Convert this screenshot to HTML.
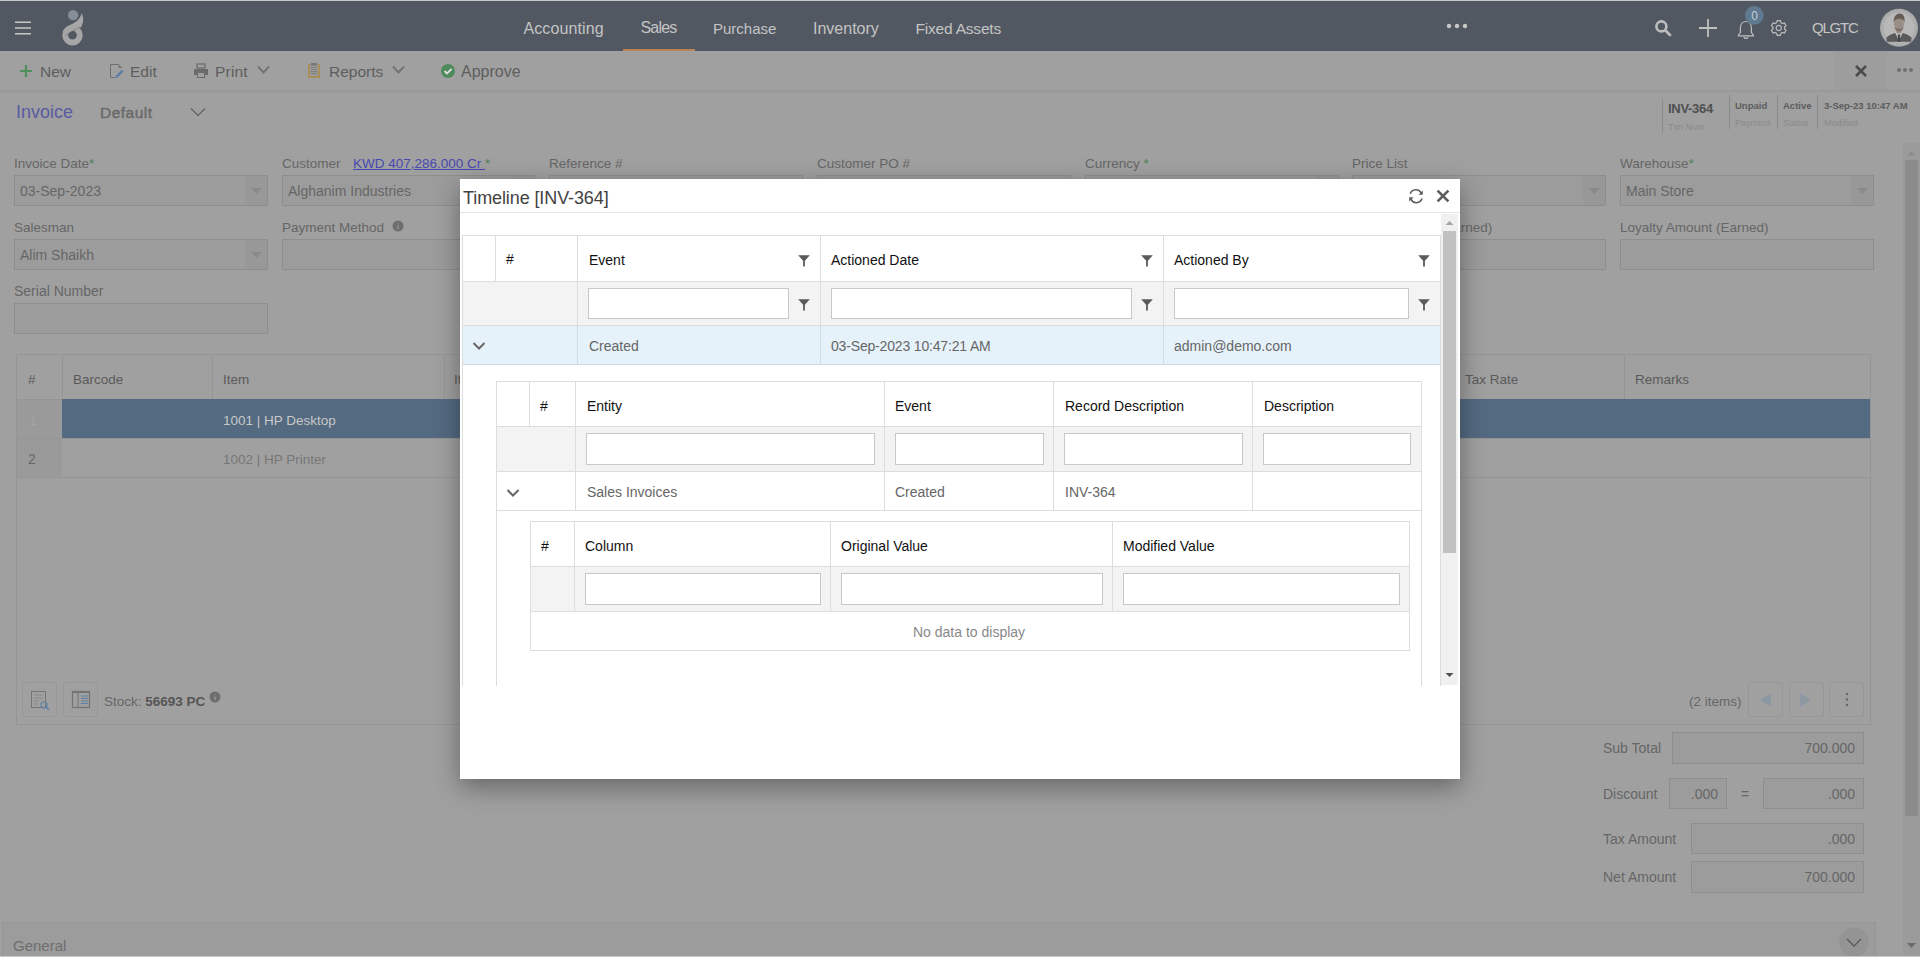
<!DOCTYPE html>
<html><head><meta charset="utf-8"><title>Invoice</title>
<style>
html,body{margin:0;padding:0}
body{width:1920px;height:957px;overflow:hidden;position:relative;background:#a0a0a0;font-family:"Liberation Sans",sans-serif}
.t{position:absolute;line-height:1;white-space:nowrap}
.r{position:absolute}
svg.r{overflow:visible}
</style></head><body>
<div class="r" style="left:0px;top:90px;width:1920px;height:1px;background:#969696"></div>
<div class="r" style="left:0px;top:91px;width:1920px;height:2px;background:#9c9c9c"></div>
<div class="r" style="left:1835px;top:51px;width:52px;height:39px;background:#9d9d9d"></div>
<svg class="r" style="left:0;top:51px" width="1920" height="40" viewBox="0 51 1920 40"><path d="M26 65v12M20 71h12" stroke="#4f8f5c" stroke-width="2.2"/><path d="M110.5 64.5h8l3.5 3.5M110.5 64.5v13h5" fill="none" stroke="#6e6e6e" stroke-width="1"/><path d="M118.5 64.5l3.5 3.5h-3.5z" fill="#777"/><path d="M115.5 78.2L116.3 75.3L121.8 69.8L123.6 71.6L118.1 77.1Z" fill="#5d7fa6"/><rect x="197" y="64" width="8" height="4" fill="none" stroke="#6a6a6a" stroke-width="1.2"/><path d="M194 69h14v6h-3v3h-8v-3h-3z" fill="#6a6a6a"/><rect x="198" y="73" width="6" height="4" fill="#a0a0a0"/><path d="M258 66.5l5.5 6 5.5-6" fill="none" stroke="#737373" stroke-width="1.9"/><rect x="308" y="64" width="12" height="14" fill="#a88f5a"/><rect x="310" y="65" width="8" height="11" fill="#9a9a9a"/><rect x="311" y="63" width="6" height="2.5" fill="#777"/><path d="M311 67.5h6M311 69.5h6M311 71.5h6M311 73.5h6" stroke="#7a7a7a" stroke-width="0.8"/><path d="M393 66.5l5.5 6 5.5-6" fill="none" stroke="#737373" stroke-width="1.9"/><circle cx="448" cy="71" r="7" fill="#4e8a5c"/><path d="M444.5 71l2.5 2.5 4.5-4.5" fill="none" stroke="#ddd" stroke-width="1.8"/><path d="M1856 66l10 10M1866 66l-10 10" stroke="#4a4a4a" stroke-width="2.5"/><circle cx="1899" cy="70" r="2" fill="#707070"/><circle cx="1905" cy="70" r="2" fill="#707070"/><circle cx="1911" cy="70" r="2" fill="#707070"/></svg>
<div class="t" style="left:40px;top:64px;font-size:15.5px;color:#5e5e5e;">New</div>
<div class="t" style="left:130px;top:64px;font-size:15.5px;color:#5e5e5e;">Edit</div>
<div class="t" style="left:215px;top:64px;font-size:15.5px;color:#5e5e5e;letter-spacing:0.2px;">Print</div>
<div class="t" style="left:329px;top:64px;font-size:15.5px;color:#5e5e5e;">Reports</div>
<div class="t" style="left:461px;top:64px;font-size:16px;color:#5e5e5e;">Approve</div>
<div class="t" style="left:16px;top:103px;font-size:18px;color:#5a5aa2;">Invoice</div>
<div class="t" style="left:100px;top:105px;font-size:15.5px;color:#6a6a6a;letter-spacing:0.5px;-webkit-text-stroke:0.45px #6a6a6a;">Default</div>
<svg class="r" style="left:188px;top:104px" width="20" height="16"><path d="M3 4.5l7 7 7-7" fill="none" stroke="#666" stroke-width="1.4"/></svg>
<div class="r" style="left:1662px;top:99px;width:1px;height:34px;background:#8a8a8a"></div>
<div class="t" style="left:1668px;top:102px;font-size:13px;color:#505050;font-weight:700;letter-spacing:-0.3px;">INV-364</div>
<div class="t" style="left:1668px;top:122.5px;font-size:9px;color:#8a8a8a;">Txn Num</div>
<div class="r" style="left:1729px;top:95px;width:1px;height:34px;background:#8a8a8a"></div>
<div class="t" style="left:1735px;top:101px;font-size:9.5px;color:#5c5c5c;font-weight:700;">Unpaid</div>
<div class="t" style="left:1735px;top:118.5px;font-size:9px;color:#8a8a8a;">Payment</div>
<div class="r" style="left:1777px;top:95px;width:1px;height:34px;background:#8a8a8a"></div>
<div class="t" style="left:1783px;top:101px;font-size:9.5px;color:#5c5c5c;font-weight:700;">Active</div>
<div class="t" style="left:1783px;top:118.5px;font-size:9px;color:#8a8a8a;">Status</div>
<div class="r" style="left:1817px;top:95px;width:1px;height:34px;background:#8a8a8a"></div>
<div class="t" style="left:1824px;top:101px;font-size:9.5px;color:#5c5c5c;font-weight:700;">3-Sep-23 10:47 AM</div>
<div class="t" style="left:1824px;top:118.5px;font-size:9px;color:#8a8a8a;">Modified</div>
<div class="t" style="left:14px;top:157px;font-size:13.5px;color:#666666;">Invoice Date<span style="color:#4d7d58">*</span></div>
<div class="t" style="left:282px;top:157px;font-size:13.5px;color:#666666;">Customer</div>
<div class="t" style="left:549px;top:157px;font-size:13.5px;color:#666666;">Reference #</div>
<div class="t" style="left:817px;top:157px;font-size:13.5px;color:#666666;">Customer PO #</div>
<div class="t" style="left:1085px;top:157px;font-size:13.5px;color:#666666;">Currency <span style="color:#4d7d58">*</span></div>
<div class="t" style="left:1352px;top:157px;font-size:13.5px;color:#666666;">Price List</div>
<div class="t" style="left:1620px;top:157px;font-size:13.5px;color:#666666;">Warehouse<span style="color:#4d7d58">*</span></div>
<div class="t" style="left:353px;top:157px;font-size:13.5px;color:#4848b0;"><span style="text-decoration:underline">KWD 407,286.000 Cr </span><span style="color:#4d7d58">*</span></div>
<div class="r" style="left:14px;top:175px;width:254px;height:31px;background:#9c9c9c;border:1px solid #8e8e8e;box-sizing:border-box"></div>
<div class="r" style="left:245px;top:176px;width:22px;height:29px;background:#989898"></div>
<svg class="r" style="left:251px;top:188px" width="11" height="6"><path d="M0 0h11l-5.5 6z" fill="#8a8a8a"/></svg>
<div class="t" style="left:20px;top:184px;font-size:14px;color:#666;">03-Sep-2023</div>
<div class="r" style="left:282px;top:175px;width:253px;height:31px;background:#9c9c9c;border:1px solid #8e8e8e;box-sizing:border-box"></div>
<div class="r" style="left:512px;top:176px;width:22px;height:29px;background:#989898"></div>
<svg class="r" style="left:518px;top:188px" width="11" height="6"><path d="M0 0h11l-5.5 6z" fill="#8a8a8a"/></svg>
<div class="t" style="left:288px;top:184px;font-size:14px;color:#666;">Alghanim Industries</div>
<div class="r" style="left:549px;top:175px;width:254px;height:31px;background:#9c9c9c;border:1px solid #8e8e8e;box-sizing:border-box"></div>
<div class="r" style="left:817px;top:175px;width:254px;height:31px;background:#9c9c9c;border:1px solid #8e8e8e;box-sizing:border-box"></div>
<div class="r" style="left:1085px;top:175px;width:254px;height:31px;background:#9c9c9c;border:1px solid #8e8e8e;box-sizing:border-box"></div>
<div class="r" style="left:1316px;top:176px;width:22px;height:29px;background:#989898"></div>
<svg class="r" style="left:1322px;top:188px" width="11" height="6"><path d="M0 0h11l-5.5 6z" fill="#8a8a8a"/></svg>
<div class="r" style="left:1352px;top:175px;width:254px;height:31px;background:#9c9c9c;border:1px solid #8e8e8e;box-sizing:border-box"></div>
<div class="r" style="left:1583px;top:176px;width:22px;height:29px;background:#989898"></div>
<svg class="r" style="left:1589px;top:188px" width="11" height="6"><path d="M0 0h11l-5.5 6z" fill="#8a8a8a"/></svg>
<div class="r" style="left:1620px;top:175px;width:254px;height:31px;background:#9c9c9c;border:1px solid #8e8e8e;box-sizing:border-box"></div>
<div class="r" style="left:1851px;top:176px;width:22px;height:29px;background:#989898"></div>
<svg class="r" style="left:1857px;top:188px" width="11" height="6"><path d="M0 0h11l-5.5 6z" fill="#8a8a8a"/></svg>
<div class="t" style="left:1626px;top:184px;font-size:14px;color:#666;">Main Store</div>
<div class="t" style="left:14px;top:221px;font-size:13.5px;color:#666666;">Salesman</div>
<div class="t" style="left:282px;top:221px;font-size:13.5px;color:#666666;">Payment Method</div>
<div class="t" style="left:1352px;top:221px;font-size:13.5px;color:#666666;">Loyalty Points (Earned)</div>
<div class="t" style="left:1620px;top:221px;font-size:13.5px;color:#666666;">Loyalty Amount (Earned)</div>
<svg class="r" style="left:392px;top:220px" width="12" height="12"><circle cx="6" cy="6" r="5.5" fill="#6e6e6e"/><path d="M6 3.5v.8M6 5.5v3.5" stroke="#9a9a9a" stroke-width="1.3"/></svg>
<div class="r" style="left:14px;top:239px;width:254px;height:31px;background:#9c9c9c;border:1px solid #8e8e8e;box-sizing:border-box"></div>
<div class="r" style="left:245px;top:240px;width:22px;height:29px;background:#989898"></div>
<svg class="r" style="left:251px;top:252px" width="11" height="6"><path d="M0 0h11l-5.5 6z" fill="#8a8a8a"/></svg>
<div class="t" style="left:20px;top:248px;font-size:14px;color:#666;">Alim Shaikh</div>
<div class="r" style="left:282px;top:239px;width:253px;height:31px;background:#9c9c9c;border:1px solid #8e8e8e;box-sizing:border-box"></div>
<div class="r" style="left:549px;top:239px;width:254px;height:31px;background:#9c9c9c;border:1px solid #8e8e8e;box-sizing:border-box"></div>
<div class="r" style="left:817px;top:239px;width:254px;height:31px;background:#9c9c9c;border:1px solid #8e8e8e;box-sizing:border-box"></div>
<div class="r" style="left:1085px;top:239px;width:254px;height:31px;background:#9c9c9c;border:1px solid #8e8e8e;box-sizing:border-box"></div>
<div class="r" style="left:1352px;top:239px;width:254px;height:31px;background:#9c9c9c;border:1px solid #8e8e8e;box-sizing:border-box"></div>
<div class="r" style="left:1620px;top:239px;width:254px;height:31px;background:#9c9c9c;border:1px solid #8e8e8e;box-sizing:border-box"></div>
<div class="t" style="left:14px;top:284px;font-size:14px;color:#666666;">Serial Number</div>
<div class="r" style="left:14px;top:303px;width:254px;height:31px;background:#9c9c9c;border:1px solid #8e8e8e;box-sizing:border-box"></div>
<div class="r" style="left:16px;top:354px;width:1855px;height:371px;border:1px solid #959595;box-sizing:border-box"></div>
<div class="r" style="left:17px;top:399px;width:1853px;height:1px;background:#959595"></div>
<div class="r" style="left:17px;top:477px;width:1853px;height:1px;background:#959595"></div>
<div class="r" style="left:62px;top:355px;width:1px;height:44px;background:#959595"></div>
<div class="r" style="left:212px;top:355px;width:1px;height:44px;background:#959595"></div>
<div class="r" style="left:444px;top:355px;width:1px;height:44px;background:#959595"></div>
<div class="r" style="left:1624px;top:355px;width:1px;height:44px;background:#959595"></div>
<div class="r" style="left:17px;top:400px;width:45px;height:77px;background:#9a9a9a"></div>
<div class="r" style="left:62px;top:399px;width:1808px;height:40px;background:#546a81"></div>
<div class="r" style="left:17px;top:438px;width:1853px;height:1px;background:#959595"></div>
<div class="t" style="left:28px;top:373px;font-size:13.5px;color:#5a5a5a;">#</div>
<div class="t" style="left:73px;top:373px;font-size:13.5px;color:#5a5a5a;">Barcode</div>
<div class="t" style="left:223px;top:373px;font-size:13.5px;color:#5a5a5a;">Item</div>
<div class="t" style="left:454px;top:373px;font-size:13.5px;color:#5a5a5a;">It</div>
<div class="t" style="left:1465px;top:373px;font-size:13.5px;color:#5a5a5a;">Tax Rate</div>
<div class="t" style="left:1635px;top:373px;font-size:13.5px;color:#5a5a5a;">Remarks</div>
<div class="t" style="left:29px;top:413px;font-size:14px;color:#a4a4a4;">1</div>
<div class="t" style="left:223px;top:414px;font-size:13.5px;color:#c8c8c8;">1001 | HP Desktop</div>
<div class="t" style="left:28px;top:452px;font-size:14px;color:#666;">2</div>
<div class="t" style="left:223px;top:453px;font-size:13.5px;color:#777;">1002 | HP Printer</div>
<div class="r" style="left:17px;top:724px;width:1853px;height:1px;background:#959595"></div>
<div class="r" style="left:22px;top:682px;width:35px;height:35px;border:1px solid #979797;border-radius:3px;box-sizing:border-box"></div>
<div class="r" style="left:63px;top:682px;width:35px;height:35px;border:1px solid #979797;border-radius:3px;box-sizing:border-box"></div>
<svg class="r" style="left:22px;top:682px" width="80" height="36"><rect x="9.5" y="9.5" width="14" height="16" fill="none" stroke="#747474" stroke-width="1"/><path d="M12 13h9M12 16h9M12 19h5M12 22h4" stroke="#888" stroke-width="1"/><circle cx="22" cy="23" r="3" fill="none" stroke="#5d7fa6" stroke-width="1.2"/><path d="M24 25l3 3" stroke="#5d7fa6" stroke-width="1.4"/><rect x="50.5" y="9.5" width="17" height="16" fill="none" stroke="#747474" stroke-width="1.3"/><rect x="50" y="9" width="18" height="2" fill="#747474"/><path d="M56 10v15" stroke="#747474" stroke-width="1"/><path d="M59 14h7M59 16.5h7M59 19h7M59 21.5h7" stroke="#5d7fa6" stroke-width="1"/></svg>
<div class="t" style="left:104px;top:695px;font-size:13.5px;color:#666;">Stock: <b style="color:#555">56693 PC</b></div>
<svg class="r" style="left:209px;top:691px" width="12" height="12"><circle cx="6" cy="6" r="5.5" fill="#6e6e6e"/><path d="M6 3.5v.8M6 5.5v3.5" stroke="#9a9a9a" stroke-width="1.3"/></svg>
<div class="t" style="left:1689px;top:695px;font-size:13.5px;color:#666;">(2 items)</div>
<div class="r" style="left:1748px;top:682px;width:35px;height:35px;border:1px solid #979797;border-radius:3px;box-sizing:border-box"></div>
<div class="r" style="left:1789px;top:682px;width:35px;height:35px;border:1px solid #979797;border-radius:3px;box-sizing:border-box"></div>
<div class="r" style="left:1829px;top:682px;width:35px;height:35px;border:1px solid #979797;border-radius:3px;box-sizing:border-box"></div>
<svg class="r" style="left:1748px;top:682px" width="120" height="36"><path d="M12 18l11-7v14z" fill="#8c97a2"/><path d="M63 18l-11-7v14z" fill="#8c97a2"/><circle cx="99" cy="12" r="1.2" fill="#666"/><circle cx="99" cy="17.5" r="1.2" fill="#666"/><circle cx="99" cy="23" r="1.2" fill="#666"/></svg>
<div class="t" style="left:1603px;top:741px;font-size:14px;color:#666666;">Sub Total</div>
<div class="r" style="left:1672px;top:732px;width:192px;height:32px;background:#9c9c9c;border:1px solid #8e8e8e;box-sizing:border-box"></div>
<div class="t" style="left:1672px;top:741px;width:183px;text-align:right;font-size:14px;color:#666">700.000</div>
<div class="t" style="left:1603px;top:787px;font-size:14px;color:#666666;">Discount</div>
<div class="r" style="left:1669px;top:778px;width:58px;height:31px;background:#9c9c9c;border:1px solid #8e8e8e;box-sizing:border-box"></div>
<div class="t" style="left:1669px;top:787px;width:49px;text-align:right;font-size:14px;color:#666">.000</div>
<div class="t" style="left:1741px;top:787px;font-size:14px;color:#666666;">=</div>
<div class="r" style="left:1763px;top:778px;width:101px;height:31px;background:#9c9c9c;border:1px solid #8e8e8e;box-sizing:border-box"></div>
<div class="t" style="left:1763px;top:787px;width:92px;text-align:right;font-size:14px;color:#666">.000</div>
<div class="t" style="left:1603px;top:832px;font-size:14px;color:#666666;">Tax Amount</div>
<div class="r" style="left:1691px;top:823px;width:173px;height:31px;background:#9c9c9c;border:1px solid #8e8e8e;box-sizing:border-box"></div>
<div class="t" style="left:1691px;top:832px;width:164px;text-align:right;font-size:14px;color:#666">.000</div>
<div class="t" style="left:1603px;top:870px;font-size:14px;color:#666666;">Net Amount</div>
<div class="r" style="left:1691px;top:861px;width:173px;height:32px;background:#9c9c9c;border:1px solid #8e8e8e;box-sizing:border-box"></div>
<div class="t" style="left:1691px;top:870px;width:164px;text-align:right;font-size:14px;color:#666">700.000</div>
<div class="r" style="left:2px;top:922px;width:1874px;height:40px;background:#9c9c9c;border:1px solid #969696;box-sizing:border-box"></div>
<div class="t" style="left:13px;top:938px;font-size:15px;color:#6e6e6e;">General</div>
<svg class="r" style="left:1838px;top:926px" width="32" height="31"><circle cx="16" cy="16" r="14.7" fill="#949494"/><path d="M9 13l7 7 7-7" fill="none" stroke="#5a5a5a" stroke-width="1.3"/></svg>
<div class="r" style="left:0px;top:956px;width:1920px;height:1px;background:#c8c8c8"></div>
<div class="r" style="left:1903px;top:143px;width:17px;height:813px;background:#9b9b9b"></div>
<div class="r" style="left:1905px;top:160px;width:13px;height:656px;background:#8c8c8c"></div>
<svg class="r" style="left:1903px;top:143px" width="17" height="813"><path d="M4.5 12.5h8l-4-4z" fill="#8a8a8a"/><path d="M4 800h9l-4.5 5z" fill="#6a6a6a"/></svg>
<div class="r" style="left:0px;top:0px;width:1920px;height:1px;background:#c6c6c6"></div>
<div class="r" style="left:0px;top:1px;width:1920px;height:50px;background:#525862"></div>
<svg class="r" style="left:0;top:0" width="1920" height="51"><path d="M15 22.3h16M15 28h16M15 33.7h16" stroke="#c8c8c8" stroke-width="1.6"/><circle cx="73.1" cy="15.1" r="5.2" fill="#858d96"/><circle cx="72.5" cy="35.2" r="7.3" fill="none" stroke="#a6a6a6" stroke-width="5.9"/><path d="M81.6 13.2 C84 17.5 83.8 23.5 80.6 27.6 L78.8 27.2 L66 34.2 L62.6 31.5 C64 28.5 67 26 70.5 24.7 C75 22.8 80 19.5 81.6 13.2 Z" fill="#a6a6a6"/><path d="M79.4 27.3 L65 35.6" stroke="#6a6f76" stroke-width="0.6"/><rect x="623" y="49" width="72" height="2" fill="#b8845a"/><circle cx="1449" cy="26" r="2.2" fill="#c8c8c8"/><circle cx="1457" cy="26" r="2.2" fill="#c8c8c8"/><circle cx="1465" cy="26" r="2.2" fill="#c8c8c8"/><circle cx="1661.4" cy="26.4" r="5" fill="none" stroke="#bdbdbd" stroke-width="2.6"/><path d="M1665.5 30.5l4.5 4.5" stroke="#bdbdbd" stroke-width="2.8" stroke-linecap="round"/><path d="M1708 19v18M1699 28h18" stroke="#c0c0c0" stroke-width="1.8"/><path d="M1745.9 21.5c-3.5 0-5.5 3-5.5 6.5v4.5l-2 2.5v0.8h15v-0.8l-2-2.5v-4.5c0-3.5-2-6.5-5.5-6.5z" fill="none" stroke="#bdbdbd" stroke-width="1.2"/><path d="M1744 36.5a2 2 0 0 0 4 0" fill="none" stroke="#bdbdbd" stroke-width="1.1"/><circle cx="1754.3" cy="15.4" r="9.4" fill="#5f7a91"/><g transform="translate(1778.75 27.9)" fill="none" stroke="#bdbdbd" stroke-width="1.2"><circle r="2.6"/><path d="M-1.6-7.3h3.2l.5 2 1.6.9 2-.6 1.6 2.8-1.5 1.4v1.8l1.5 1.4-1.6 2.8-2-.6-1.6.9-.5 2h-3.2l-.5-2-1.6-.9-2 .6-1.6-2.8 1.5-1.4v-1.8l-1.5-1.4 1.6-2.8 2 .6 1.6-.9z"/></g><g transform="translate(1899 27.8)"><circle r="19" fill="#aaaaaa"/><circle r="16.6" fill="#b8b8b8"/><circle r="15.8" fill="none" stroke="#909090" stroke-width="0.5" stroke-dasharray="2 1.2"/><path d="M-12.5 9.7C-9.5 7 -6.5 6 -4 5.2L0 8L4 5.2C6.5 6 9.5 7 12.5 9.7L12.2 13.9H-12.2Z" fill="#5a5a5a"/><path d="M-3.8 4.4L0 13.9L3.8 4.4Z" fill="#cbcbcb"/><path d="M-1.1 8.2h2.2l.8 5.7h-3.8z" fill="#474747"/><path d="M-1.6 6.8h3.2l-.6 1.6h-2z" fill="#474747"/><rect x="-2.6" y="1" width="5.2" height="4.5" fill="#978b83"/><ellipse cx="0" cy="-4" rx="4.9" ry="6.6" fill="#998d85"/><path d="M-4.7 -1C-4 2.5 -2 3.8 0 3.8S4 2.5 4.7 -1C3.5 0.5 2 1 0 1S-3.5 0.5 -4.7 -1Z" fill="#7d716a"/><path d="M-5.2 -4.5C-6 -11 -2.5 -14.3 0.5 -14.3C4.5 -14.3 6.3 -11 5.4 -4.5C5 -7.5 4 -9 0 -9C-3.5 -9 -4.6 -7.5 -5.2 -4.5Z" fill="#675c55"/></g></svg>
<div class="t" style="left:1750.5px;top:10px;font-size:12px;color:#c5ccd3;width:8px;text-align:center;">0</div>
<div class="t" style="left:523.5px;top:21px;font-size:16px;color:#c4c4c4;letter-spacing:0.1px;">Accounting</div>
<div class="t" style="left:640.5px;top:20px;font-size:16px;color:#c4c4c4;letter-spacing:-0.8px;">Sales</div>
<div class="t" style="left:713px;top:21px;font-size:15px;color:#c4c4c4;">Purchase</div>
<div class="t" style="left:813px;top:21px;font-size:16px;color:#c4c4c4;">Inventory</div>
<div class="t" style="left:915.5px;top:21px;font-size:15.5px;color:#c4c4c4;letter-spacing:-0.2px;">Fixed Assets</div>
<div class="t" style="left:1812px;top:20px;font-size:15px;color:#c4c4c4;letter-spacing:-1.2px;">QLGTC</div>
<div class="r" style="left:460px;top:179px;width:1000px;height:600px;background:#fff;box-shadow:0 8px 24px rgba(0,0,0,0.37)"></div>
<div class="t" style="left:463px;top:189px;font-size:18px;color:#424242;letter-spacing:-0.1px;">Timeline [INV-364]</div>
<div class="r" style="left:460px;top:212px;width:1000px;height:1px;background:#e6e6e6"></div>
<svg class="r" style="left:0;top:0" width="1" height="1"><path d="M1410.2 193.8A5.9 5.9 0 0 1 1421.2 193.2M1422 198.6A5.9 5.9 0 0 1 1411 199.2" fill="none" stroke="#5c5c5c" stroke-width="1.6"/><path d="M1422.8 190.6V194.8H1418.7Z" fill="#5c5c5c"/><path d="M1409.2 197.3H1413.6L1409.2 201.6Z" fill="#5c5c5c"/><path d="M1437.6 190.6L1448.4 201.4M1448.4 190.6L1437.6 201.4" stroke="#5c5c5c" stroke-width="2.7"/></svg>
<div class="r" style="left:1441px;top:214px;width:17px;height:471px;background:#f0f0f0"></div>
<div class="r" style="left:1443px;top:231px;width:13px;height:322px;background:#c1c1c1"></div>
<svg class="r" style="left:1441px;top:214px" width="17" height="471"><path d="M4.5 11h8l-4-4z" fill="#a3a3a3"/><path d="M4.5 459h8l-4 4z" fill="#505050"/></svg>
<div class="r" style="left:462px;top:281px;width:978px;height:44px;background:#f3f3f3"></div>
<div class="r" style="left:462px;top:325px;width:978px;height:39px;background:#e6f2fa"></div>
<div class="r" style="left:462px;top:235px;width:979px;height:1px;background:#dddddd"></div>
<div class="r" style="left:462px;top:281px;width:979px;height:1px;background:#dddddd"></div>
<div class="r" style="left:462px;top:325px;width:979px;height:1px;background:#dddddd"></div>
<div class="r" style="left:462px;top:364px;width:979px;height:1px;background:#d2dde6"></div>
<div class="r" style="left:462px;top:235px;width:1px;height:451px;background:#dddddd"></div>
<div class="r" style="left:1440px;top:235px;width:1px;height:451px;background:#dddddd"></div>
<div class="r" style="left:495px;top:235px;width:1px;height:46px;background:#dddddd"></div>
<div class="r" style="left:577px;top:235px;width:1px;height:90px;background:#dddddd"></div>
<div class="r" style="left:577px;top:325px;width:1px;height:39px;background:#d0dce6"></div>
<div class="r" style="left:820px;top:235px;width:1px;height:90px;background:#dddddd"></div>
<div class="r" style="left:820px;top:325px;width:1px;height:39px;background:#d0dce6"></div>
<div class="r" style="left:1163px;top:235px;width:1px;height:90px;background:#dddddd"></div>
<div class="r" style="left:1163px;top:325px;width:1px;height:39px;background:#d0dce6"></div>
<div class="t" style="left:506px;top:252px;font-size:14px;color:#111;">#</div>
<div class="t" style="left:589px;top:253px;font-size:14px;color:#111;">Event</div>
<div class="t" style="left:831px;top:253px;font-size:14px;color:#111;">Actioned Date</div>
<div class="t" style="left:1174px;top:253px;font-size:14px;color:#111;">Actioned By</div>
<svg class="r" style="left:798px;top:255px" width="13" height="13"><path d="M0.2 0.3H11.8L6.9 5.8V11.6H5.1V5.8Z" fill="#5a5a5a"/></svg>
<svg class="r" style="left:1141px;top:255px" width="13" height="13"><path d="M0.2 0.3H11.8L6.9 5.8V11.6H5.1V5.8Z" fill="#5a5a5a"/></svg>
<svg class="r" style="left:1418px;top:255px" width="13" height="13"><path d="M0.2 0.3H11.8L6.9 5.8V11.6H5.1V5.8Z" fill="#5a5a5a"/></svg>
<div class="r" style="left:588px;top:288px;width:201px;height:31px;background:#fff;border:1px solid #c8c8c8;box-sizing:border-box"></div>
<div class="r" style="left:831px;top:288px;width:301px;height:31px;background:#fff;border:1px solid #c8c8c8;box-sizing:border-box"></div>
<div class="r" style="left:1174px;top:288px;width:235px;height:31px;background:#fff;border:1px solid #c8c8c8;box-sizing:border-box"></div>
<svg class="r" style="left:798px;top:299px" width="13" height="13"><path d="M0.2 0.3H11.8L6.9 5.8V11.6H5.1V5.8Z" fill="#5a5a5a"/></svg>
<svg class="r" style="left:1141px;top:299px" width="13" height="13"><path d="M0.2 0.3H11.8L6.9 5.8V11.6H5.1V5.8Z" fill="#5a5a5a"/></svg>
<svg class="r" style="left:1418px;top:299px" width="13" height="13"><path d="M0.2 0.3H11.8L6.9 5.8V11.6H5.1V5.8Z" fill="#5a5a5a"/></svg>
<svg class="r" style="left:472px;top:341px" width="14" height="10"><path d="M1.5 2l5.5 5.5 5.5-5.5" fill="none" stroke="#666" stroke-width="2"/></svg>
<div class="t" style="left:589px;top:339px;font-size:14px;color:#666;">Created</div>
<div class="t" style="left:831px;top:339px;font-size:14px;color:#666;letter-spacing:-0.17px;">03-Sep-2023 10:47:21 AM</div>
<div class="t" style="left:1174px;top:339px;font-size:14px;color:#666;">admin@demo.com</div>
<div class="r" style="left:496px;top:426px;width:925px;height:45px;background:#f3f3f3"></div>
<div class="r" style="left:496px;top:381px;width:926px;height:1px;background:#dddddd"></div>
<div class="r" style="left:496px;top:426px;width:926px;height:1px;background:#dddddd"></div>
<div class="r" style="left:496px;top:471px;width:926px;height:1px;background:#dddddd"></div>
<div class="r" style="left:496px;top:510px;width:926px;height:1px;background:#dddddd"></div>
<div class="r" style="left:496px;top:381px;width:1px;height:305px;background:#dddddd"></div>
<div class="r" style="left:1421px;top:381px;width:1px;height:305px;background:#dddddd"></div>
<div class="r" style="left:529px;top:381px;width:1px;height:45px;background:#dddddd"></div>
<div class="r" style="left:575px;top:381px;width:1px;height:129px;background:#dddddd"></div>
<div class="r" style="left:884px;top:381px;width:1px;height:129px;background:#dddddd"></div>
<div class="r" style="left:1053px;top:381px;width:1px;height:129px;background:#dddddd"></div>
<div class="r" style="left:1252px;top:381px;width:1px;height:129px;background:#dddddd"></div>
<div class="t" style="left:540px;top:399px;font-size:14px;color:#111;">#</div>
<div class="t" style="left:587px;top:399px;font-size:14px;color:#111;">Entity</div>
<div class="t" style="left:895px;top:399px;font-size:14px;color:#111;">Event</div>
<div class="t" style="left:1065px;top:399px;font-size:14px;color:#111;">Record Description</div>
<div class="t" style="left:1264px;top:399px;font-size:14px;color:#111;">Description</div>
<div class="r" style="left:586px;top:433px;width:289px;height:32px;background:#fff;border:1px solid #c8c8c8;box-sizing:border-box"></div>
<div class="r" style="left:895px;top:433px;width:149px;height:32px;background:#fff;border:1px solid #c8c8c8;box-sizing:border-box"></div>
<div class="r" style="left:1064px;top:433px;width:179px;height:32px;background:#fff;border:1px solid #c8c8c8;box-sizing:border-box"></div>
<div class="r" style="left:1263px;top:433px;width:148px;height:32px;background:#fff;border:1px solid #c8c8c8;box-sizing:border-box"></div>
<svg class="r" style="left:506px;top:488px" width="14" height="10"><path d="M1.5 2l5.5 5.5 5.5-5.5" fill="none" stroke="#666" stroke-width="2"/></svg>
<div class="t" style="left:587px;top:485px;font-size:14px;color:#666;">Sales Invoices</div>
<div class="t" style="left:895px;top:485px;font-size:14px;color:#666;">Created</div>
<div class="t" style="left:1065px;top:485px;font-size:14px;color:#666;">INV-364</div>
<div class="r" style="left:530px;top:566px;width:879px;height:45px;background:#f3f3f3"></div>
<div class="r" style="left:530px;top:521px;width:880px;height:1px;background:#dddddd"></div>
<div class="r" style="left:530px;top:566px;width:880px;height:1px;background:#dddddd"></div>
<div class="r" style="left:530px;top:611px;width:880px;height:1px;background:#dddddd"></div>
<div class="r" style="left:530px;top:650px;width:880px;height:1px;background:#dddddd"></div>
<div class="r" style="left:530px;top:521px;width:1px;height:130px;background:#dddddd"></div>
<div class="r" style="left:1409px;top:521px;width:1px;height:130px;background:#dddddd"></div>
<div class="r" style="left:574px;top:521px;width:1px;height:90px;background:#dddddd"></div>
<div class="r" style="left:830px;top:521px;width:1px;height:90px;background:#dddddd"></div>
<div class="r" style="left:1112px;top:521px;width:1px;height:90px;background:#dddddd"></div>
<div class="t" style="left:541px;top:539px;font-size:14px;color:#111;">#</div>
<div class="t" style="left:585px;top:539px;font-size:14px;color:#111;">Column</div>
<div class="t" style="left:841px;top:539px;font-size:14px;color:#111;">Original Value</div>
<div class="t" style="left:1123px;top:539px;font-size:14px;color:#111;">Modified Value</div>
<div class="r" style="left:585px;top:573px;width:236px;height:32px;background:#fff;border:1px solid #c8c8c8;box-sizing:border-box"></div>
<div class="r" style="left:841px;top:573px;width:262px;height:32px;background:#fff;border:1px solid #c8c8c8;box-sizing:border-box"></div>
<div class="r" style="left:1123px;top:573px;width:277px;height:32px;background:#fff;border:1px solid #c8c8c8;box-sizing:border-box"></div>
<div class="t" style="left:913px;top:625px;font-size:14px;color:#888;">No data to display</div>
</body></html>
